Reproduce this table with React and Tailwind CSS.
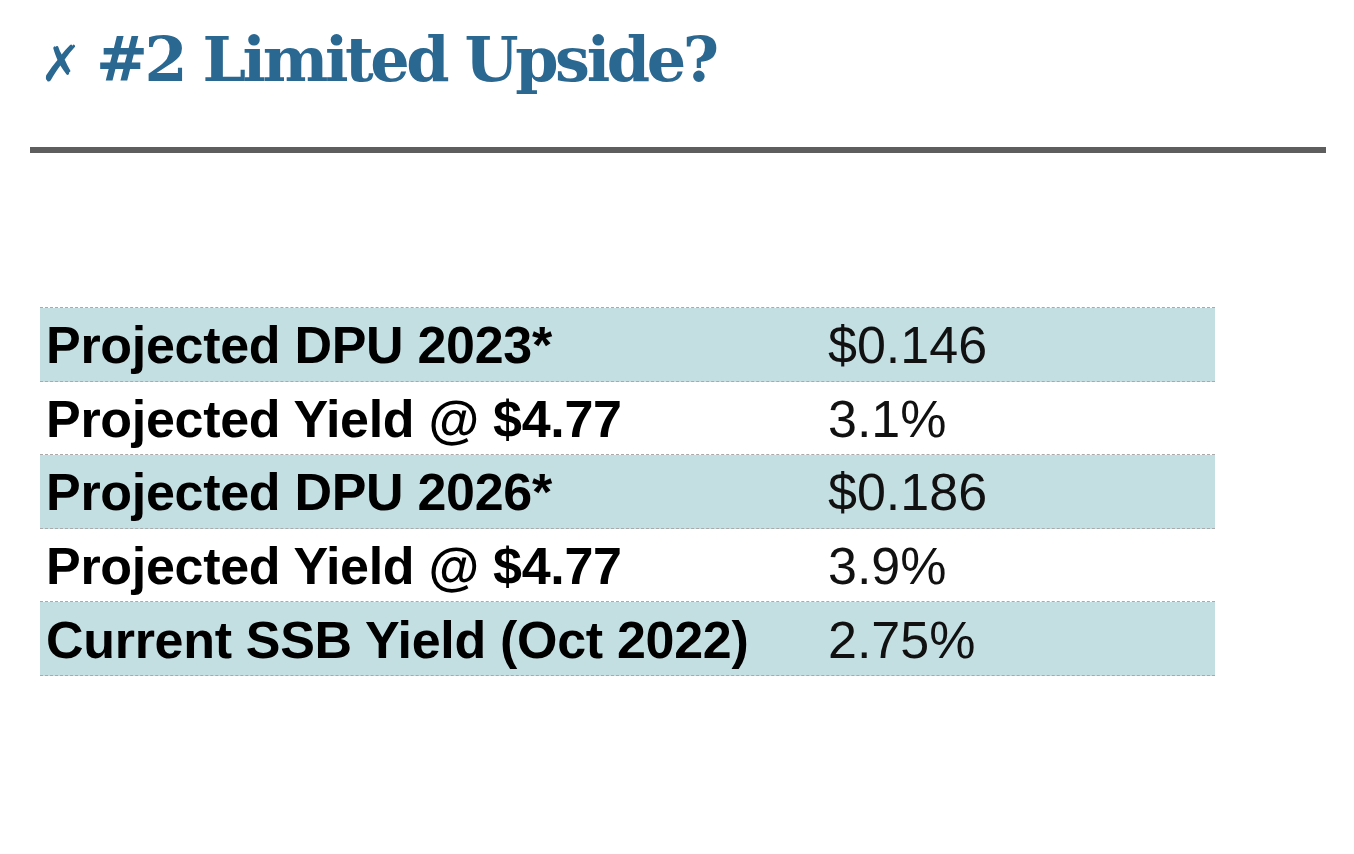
const rows = [
  { label: 'Projected DPU 2023*', value: '$0.146', shaded: true },
  { label: 'Projected Yield @ $4.77', value: '3.1%', shaded: false },
  { label: 'Projected DPU 2026*', value: '$0.186', shaded: true },
  { label: 'Projected Yield @ $4.77', value: '3.9%', shaded: false },
  { label: 'Current SSB Yield (Oct 2022)', value: '2.75%', shaded: true },
]

export default function App() {
  return (
    <div className="w-[1354px] h-[854px] bg-white overflow-hidden">
      <div className="pt-[24px] pl-[40px] h-[147px]">
        <h1
          className="text-[#2b6891] font-bold text-[62px] leading-[72px] tracking-[-3.4px]"
          style={{ fontFamily: '"DejaVu Serif", serif' }}
        >
          <span className="text-[50px] font-bold mr-[14px] tracking-normal" style={{ fontFamily: '"DejaVu Sans", sans-serif' }}>✗</span>
          #2 Limited Upside?
        </h1>
      </div>
      <div className="ml-[30px] w-[1296px] h-[6px] bg-[#5e5e5e]" />
      <div className="ml-[40px] mt-[154px] w-[1175px] border-t border-dashed border-[#aaaaaa]" style={{ fontFamily: '"Liberation Sans", Arial, sans-serif' }}>
        {rows.map((r, i) => (
          <div
            key={i}
            className={`flex items-center h-[73.6px] border-b border-dashed border-[#aaaaaa] ${r.shaded ? 'bg-[#c4dfe2]' : 'bg-white'}`}
          >
            <div className="w-[788px] pl-[6px] text-[52px] leading-none font-bold text-black pt-[2px] tracking-[-0.3px]">{r.label}</div>
            <div className="text-[52px] leading-none text-[#111] pt-[2px]">{r.value}</div>
          </div>
        ))}
      </div>
    </div>
  )
}
